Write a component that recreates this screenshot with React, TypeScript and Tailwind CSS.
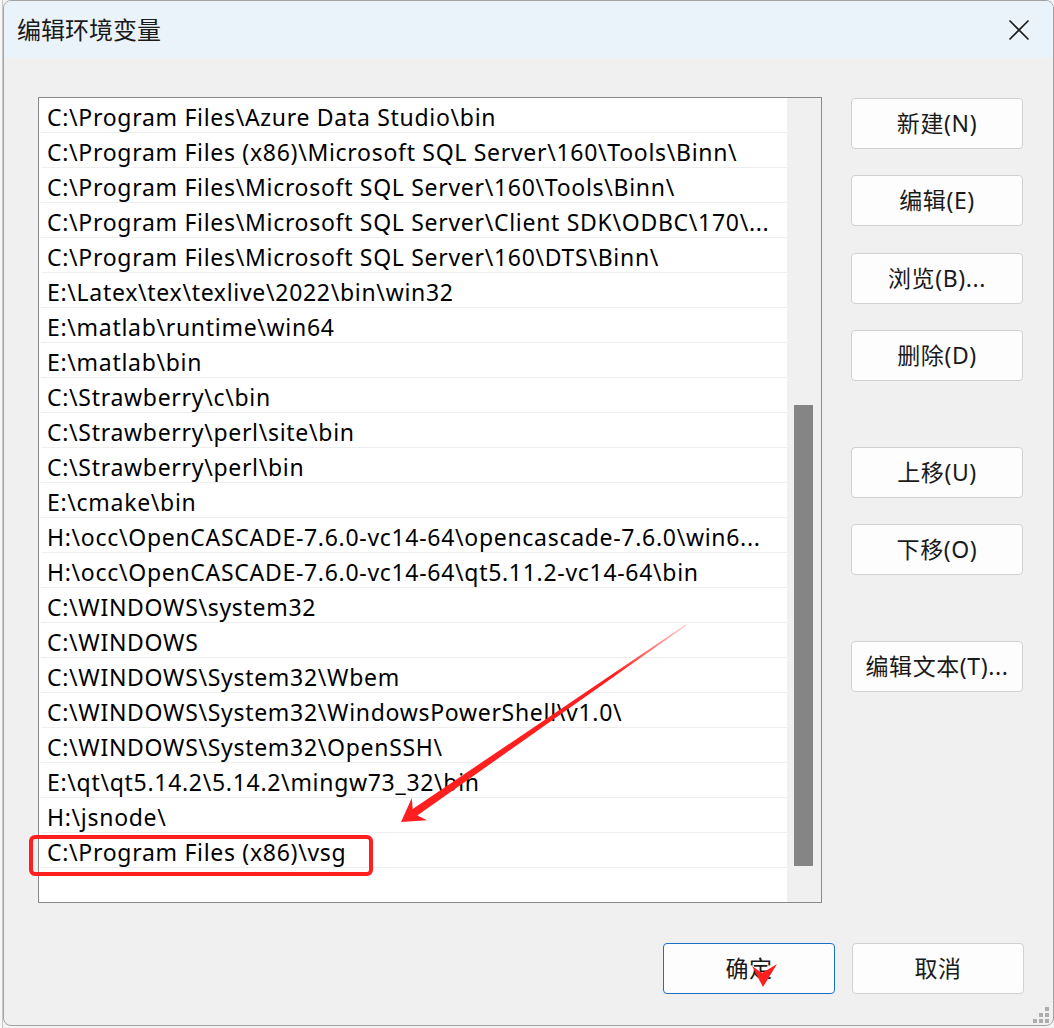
import React from "react";

const PATHS: string[] = [
  "C:\\Program Files\\Azure Data Studio\\bin",
  "C:\\Program Files (x86)\\Microsoft SQL Server\\160\\Tools\\Binn\\",
  "C:\\Program Files\\Microsoft SQL Server\\160\\Tools\\Binn\\",
  "C:\\Program Files\\Microsoft SQL Server\\Client SDK\\ODBC\\170\\...",
  "C:\\Program Files\\Microsoft SQL Server\\160\\DTS\\Binn\\",
  "E:\\Latex\\tex\\texlive\\2022\\bin\\win32",
  "E:\\matlab\\runtime\\win64",
  "E:\\matlab\\bin",
  "C:\\Strawberry\\c\\bin",
  "C:\\Strawberry\\perl\\site\\bin",
  "C:\\Strawberry\\perl\\bin",
  "E:\\cmake\\bin",
  "H:\\occ\\OpenCASCADE-7.6.0-vc14-64\\opencascade-7.6.0\\win6...",
  "H:\\occ\\OpenCASCADE-7.6.0-vc14-64\\qt5.11.2-vc14-64\\bin",
  "C:\\WINDOWS\\system32",
  "C:\\WINDOWS",
  "C:\\WINDOWS\\System32\\Wbem",
  "C:\\WINDOWS\\System32\\WindowsPowerShell\\v1.0\\",
  "C:\\WINDOWS\\System32\\OpenSSH\\",
  "E:\\qt\\qt5.14.2\\5.14.2\\mingw73_32\\bin",
  "H:\\jsnode\\",
  "C:\\Program Files (x86)\\vsg",
];

const FONT = { fontFamily: '"Noto Sans", "Noto Sans CJK SC", sans-serif' };

function DialogButton({ label, primary, className = "" }: { label: string; primary?: boolean; className?: string }) {
  return (
    <button
      className={`h-[51px] w-[172px] shrink-0 rounded-[4px] border bg-[#fdfdfd] text-[23px] tracking-[0.6px] text-[#1a1a1a] ${
        primary ? "border-[#1a6fc4]" : "border-[#d1d1d1]"
      } ${className}`}
    >
      {label}
    </button>
  );
}

function Annotations() {
  // red marks drawn on top of the screenshot
  return (
    <svg className="pointer-events-none absolute left-0 top-0" width="1054" height="1028">
      <defs>
        <linearGradient id="tail" x1="686" y1="625" x2="401" y2="822" gradientUnits="userSpaceOnUse">
          <stop offset="0" stopColor="#ff2a2a" stopOpacity="0.25" />
          <stop offset="0.25" stopColor="#ff1f1f" stopOpacity="1" />
          <stop offset="1" stopColor="#ff1f1f" stopOpacity="1" />
        </linearGradient>
      </defs>
      <rect x="31" y="837" width="340" height="37" rx="4" fill="none" stroke="#ff1f1f" strokeWidth="4" />
      <polygon
        points="401,822 411.8,798.1 412.7,809 685.7,624.6 686.3,625.4 417.3,815.6 427.2,820.3"
        fill="url(#tail)"
      />
      <polygon points="752,966 762,973 777,964 763,987" fill="#ff1f1f" />
    </svg>
  );
}

export default function App() {
  return (
    <div className="relative flex h-[1028px] w-[1054px] overflow-hidden bg-[#f3f3f3]" style={FONT}>
      {/* background window peeking out on the left */}
      <div className="w-[3px] shrink-0 border-r border-[#c8c8c8] bg-[#f7f7f7]" />

      <div className="mb-[2px] flex flex-1 flex-col overflow-hidden rounded-[8px] border border-[#a3a3a3] bg-[#f0f0f0]">
        {/* title bar */}
        <div className="flex h-[57px] shrink-0 items-center justify-between bg-[#ebf3fa] pl-[13px] pr-[22px]">
          <span className="text-[24px] text-[#1a1a1a]">编辑环境变量</span>
          <svg width="22" height="22" viewBox="0 0 22 22" className="mr-[1px]">
            <path d="M1.5 1.5 L20.5 20.5 M20.5 1.5 L1.5 20.5" stroke="#1a1a1a" strokeWidth="1.6" fill="none" />
          </svg>
        </div>

        {/* body */}
        <div className="flex flex-1 flex-col pl-[34px] pt-[39px]">
          <div className="flex gap-[29px]">
            {/* list box */}
            <div className="flex h-[806px] w-[784px] shrink-0 border border-[#8a8a8a] bg-white">
              <div className="flex min-w-0 flex-1 flex-col overflow-hidden pl-[2px]">
                {PATHS.map((p) => (
                  <div
                    key={p}
                    className="flex h-[35px] shrink-0 items-center border-b border-[#eeeeee] pl-[6px] pt-[3px] text-[23px] leading-[30px] tracking-[0.7px] text-black"
                  >
                    <span className="whitespace-pre">{p}</span>
                  </div>
                ))}
              </div>
              {/* scrollbar */}
              <div className="flex w-[34px] shrink-0 flex-col bg-[#f0f0f0] px-[7px] pt-[307px]">
                <div className="h-[461px] w-[19px] bg-[#858585]" />
              </div>
            </div>

            {/* side buttons */}
            <div className="flex flex-col pt-[1px]">
              <DialogButton label="新建(N)" />
              <DialogButton label="编辑(E)" className="mt-[26px]" />
              <DialogButton label="浏览(B)..." className="mt-[27px]" />
              <DialogButton label="删除(D)" className="mt-[26px]" />
              <DialogButton label="上移(U)" className="mt-[66px]" />
              <DialogButton label="下移(O)" className="mt-[26px]" />
              <DialogButton label="编辑文本(T)..." className="mt-[66px]" />
            </div>
          </div>

          {/* OK / Cancel */}
          <div className="mt-[40px] flex justify-end gap-[17px] pr-[29px]">
            <DialogButton label="确定" primary />
            <DialogButton label="取消" />
          </div>
        </div>
      </div>

      {/* resize grip */}
      <svg className="pointer-events-none absolute left-[1033px] top-[1007px]" width="17" height="17">
        <rect x="12" y="0" width="4" height="4" fill="#adadad" />
        <rect x="6" y="6" width="4" height="4" fill="#adadad" />
        <rect x="12" y="6" width="4" height="4" fill="#adadad" />
        <rect x="0" y="12" width="4" height="4" fill="#adadad" />
        <rect x="6" y="12" width="4" height="4" fill="#adadad" />
        <rect x="12" y="12" width="4" height="4" fill="#adadad" />
      </svg>

      <Annotations />
    </div>
  );
}
